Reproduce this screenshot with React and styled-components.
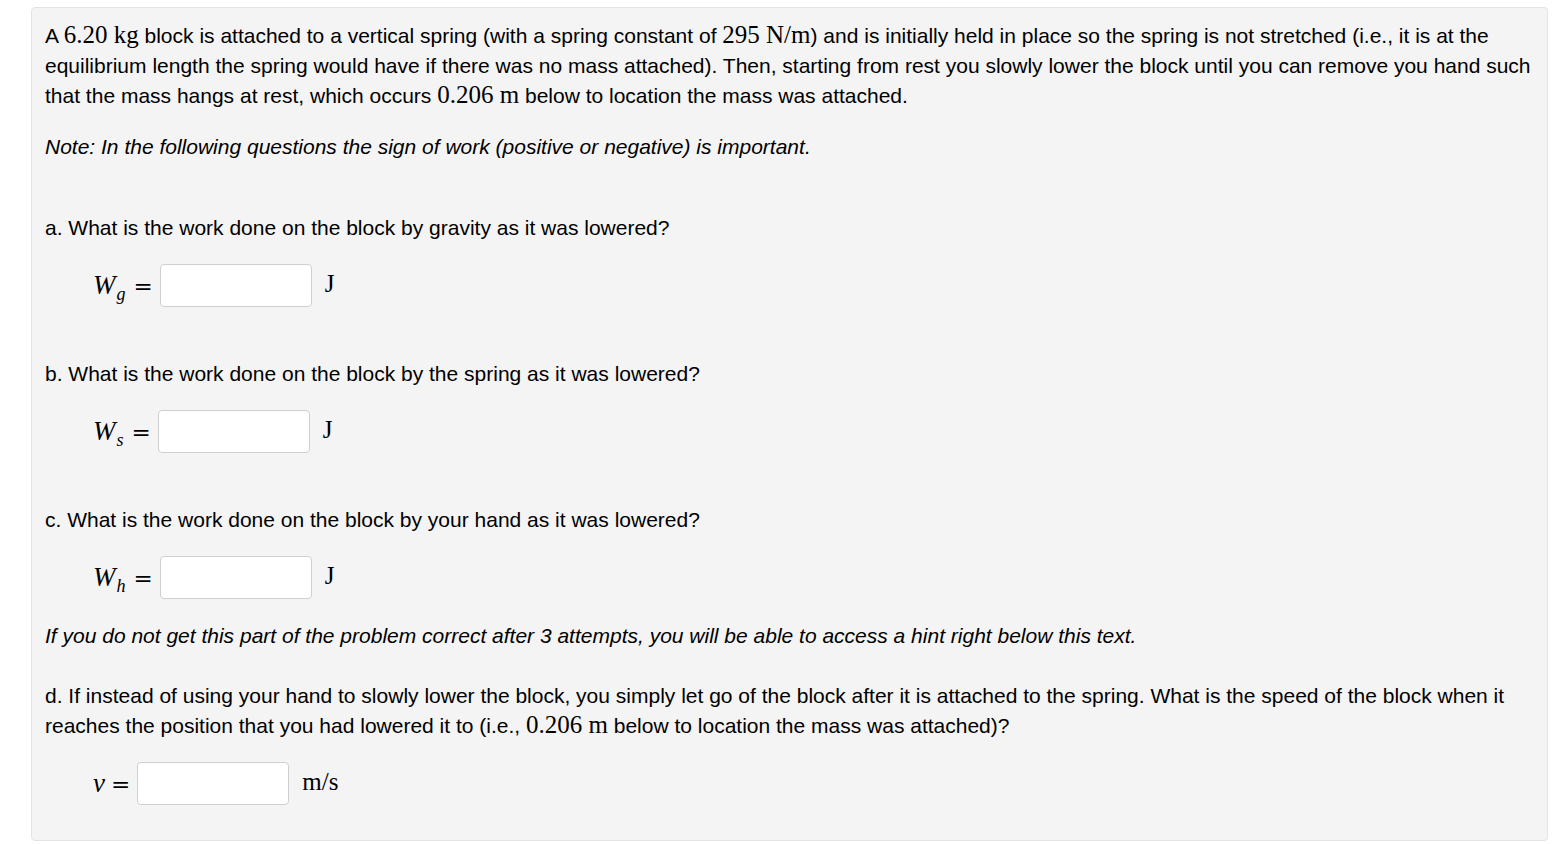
import React from 'react'
import styled, { createGlobalStyle } from 'styled-components'

const Global = createGlobalStyle`
    body{
        margin:0;
        background:#fff;
        font-family:"Liberation Sans", Arial, sans-serif;
        color:#000;
    }
`

const Panel = styled.div`
    margin:7px 10px 0 31px;
    padding:13px 14px 35px 13px;
    background:#f4f4f4;
    border:1px solid #e3e3e3;
    border-radius:4px;
    font-size:21px;
    line-height:30px;
`

const Para = styled.p`
    margin:${p => p.top || 0}px 0 0 0;
    font-style:${p => p.italic ? 'italic' : 'normal'};
`

const M = styled.span`
    font-family:"Liberation Serif", "Times New Roman", serif;
    font-size:25px;
    line-height:1;
`

const Var = styled.i`
    font-family:"Liberation Serif", "Times New Roman", serif;
    font-size:27px;
`

const Sub = styled.i`
    font-family:"Liberation Serif", "Times New Roman", serif;
    font-size:18px;
    position:relative;
    top:6px;
    margin-left:1px;
`

const Eq = styled.span`
    font-family:"DejaVu Serif", serif;
    font-size:23px;
    margin:0 7px 0 ${p => p.left || 8}px;
`

const Row = styled.div`
    display:flex;
    align-items:center;
    margin:21px 0 0 48px;
    height:43px;
`

const Label = styled.span`
    display:inline-flex;
    align-items:baseline;
    line-height:1;
`

const Input = styled.input`
    box-sizing:border-box;
    width:152px;
    height:43px;
    border:1px solid #cfcfcf;
    border-radius:4px;
    background:#fff;
    outline:none;
    padding:0 8px;
    font-size:20px;
`

const Unit = styled.span`
    font-family:"Liberation Serif", "Times New Roman", serif;
    font-size:25px;
    line-height:1;
    margin-left:13px;
    position:relative;
    top:-2px;
`

function Answer({ sym, sub, unit, eqLeft }) {
    return (
        <Row>
            <Label>
                <Var>{sym}</Var>
                {sub && <Sub>{sub}</Sub>}
                <Eq left={eqLeft}>=</Eq>
            </Label>
            <Input type="text" />
            <Unit>{unit}</Unit>
        </Row>
    )
}

export default function App() {
    return (
        <>
            <Global />
            <Panel>
                <Para>
                    A <M>6.20 kg</M> block is attached to a vertical spring (with a spring constant of <M>295 N/m</M>) and is initially held in place so the spring is not stretched (i.e., it is at the equilibrium length the spring would have if there was no mass attached). Then, starting from rest you slowly lower the block until you can remove you hand such that the mass hangs at rest, which occurs <M>0.206 m</M> below to location the mass was attached.
                </Para>
                <Para top={21} italic>
                    Note: In the following questions the sign of work (positive or negative) is important.
                </Para>

                <Para top={51}>a. What is the work done on the block by gravity as it was lowered?</Para>
                <Answer sym="W" sub="g" unit="J" />

                <Para top={52}>b. What is the work done on the block by the spring as it was lowered?</Para>
                <Answer sym="W" sub="s" unit="J" />

                <Para top={52}>c. What is the work done on the block by your hand as it was lowered?</Para>
                <Answer sym="W" sub="h" unit="J" />

                <Para top={22} italic>
                    If you do not get this part of the problem correct after 3 attempts, you will be able to access a hint right below this text.
                </Para>

                <Para top={30}>
                    d. If instead of using your hand to slowly lower the block, you simply let go of the block after it is attached to the spring. What is the speed of the block when it reaches the position that you had lowered it to (i.e., <M>0.206 m</M> below to location the mass was attached)?
                </Para>
                <Answer sym="v" unit="m/s" eqLeft={6} />
            </Panel>
        </>
    )
}
